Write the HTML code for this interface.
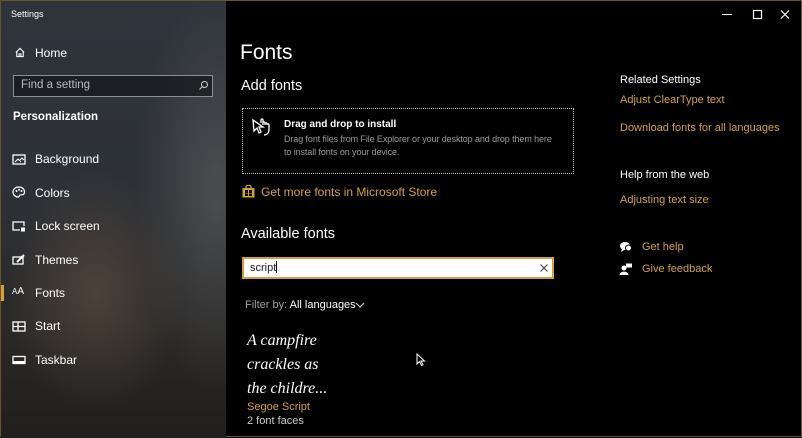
<!DOCTYPE html>
<html><head><meta charset="utf-8"><style>
*{margin:0;padding:0;box-sizing:border-box}
html,body{width:802px;height:437px;overflow:hidden;background:#000;font-family:"Liberation Sans",sans-serif;}
.win{position:absolute;left:0;top:0;width:802px;height:437px;border:1px solid #6b5326;background:#000}
.side{position:absolute;left:0;top:0;width:225px;height:437px;
background:
radial-gradient(ellipse 90px 120px at 95px 290px,rgba(110,88,70,.5),transparent),
radial-gradient(ellipse 80px 200px at 215px 190px,rgba(105,105,105,.5),transparent),
linear-gradient(180deg,#2f343c 0%,#2d3137 40%,#2a2928 75%,#201f1e 100%);}
.t{position:absolute;color:#fff;white-space:nowrap}
.gold{color:#d1a13f}
.nav{position:absolute;left:34px;font-size:12px;color:#fff}
.ic{position:absolute;left:11px;width:14px;height:11px}
</style></head><body><div class="win">
<div class="side">
<div class="t" style="left:10px;top:8px;font-size:9px">Settings</div>
<svg class="ic" style="left:12px;top:46px" width="12" height="12" viewBox="0 0 12 12"><path d="M1.5 6 L6 1.5 L10.5 6 M2.5 5 V10.5 H9.5 V5 M5 10.5 V7.5 H7 V10.5" stroke="#fff" fill="none" stroke-width="1.2"/></svg>
<div class="nav" style="top:45px">Home</div>
<div style="position:absolute;left:12px;top:74px;width:200px;height:22px;border:1px solid #8c8f94;background:rgba(20,22,26,.7)"></div>
<div class="t" style="left:20px;top:78px;font-size:11.5px;color:#b9bcc0">Find a setting</div>
<svg style="position:absolute;left:197px;top:79px" width="11" height="11" viewBox="0 0 11 11"><circle cx="6.5" cy="4.5" r="3" stroke="#ccc" fill="none"/><path d="M4.5 6.5 L1.5 9.5" stroke="#ccc"/></svg>
<div class="t" style="left:12px;top:110px;font-size:11.5px;font-weight:bold">Personalization</div>
<svg class="ic" style="top:153px" viewBox="0 0 14 11"><rect x="1" y="1" width="12" height="9" stroke="#fff" fill="none" stroke-width="1.3"/><path d="M3 8 L6 5 L9 8 M8 6 L10 4 L12 6" stroke="#fff" fill="none"/></svg>
<div class="nav" style="top:151px">Background</div>
<svg class="ic" style="top:185px;height:12px" viewBox="0 0 14 12"><path d="M7 1 C3 1 1 3.5 1 6 C1 9 3.5 11 6 11 C7.5 11 7 9.5 8 9 C9.5 8.5 12.5 9.5 12.5 6 C12.5 3 10 1 7 1Z" stroke="#fff" fill="none" stroke-width="1.2"/><circle cx="4.5" cy="5" r="1" fill="#fff"/><circle cx="7" cy="3.8" r="1" fill="#fff"/><circle cx="9.5" cy="5" r="1" fill="#fff"/></svg>
<div class="nav" style="top:185px">Colors</div>
<svg class="ic" style="top:220px" viewBox="0 0 14 11"><path d="M8 9 H1 V1 H12 V5" stroke="#fff" fill="none" stroke-width="1.3"/><rect x="9" y="6.5" width="4" height="4" fill="#fff"/></svg>
<div class="nav" style="top:218px">Lock screen</div>
<svg class="ic" style="top:253px" viewBox="0 0 14 11"><rect x="1" y="3" width="10" height="7" stroke="#fff" fill="none" stroke-width="1.3"/><path d="M5 8 L12 1" stroke="#fff" stroke-width="2"/></svg>
<div class="nav" style="top:252px">Themes</div>
<div style="position:absolute;left:0;top:284px;width:3px;height:16px;background:#d1a13f"></div>
<div class="t" style="left:11px;top:285px;font-size:8px">A<span style="font-size:10px">A</span></div>
<div class="nav" style="top:285px">Fonts</div>
<svg class="ic" style="top:320px" viewBox="0 0 14 11"><rect x="1" y="1" width="12" height="9" stroke="#fff" fill="none" stroke-width="1.3"/><path d="M1 5.5 H13 M6 1 V10" stroke="#fff" stroke-width="1.3"/></svg>
<div class="nav" style="top:318px">Start</div>
<svg class="ic" style="top:354px" viewBox="0 0 14 11"><rect x="1" y="1.5" width="12" height="7" stroke="#fff" fill="none" stroke-width="1.3"/><path d="M1 7 H13" stroke="#fff" stroke-width="2"/></svg>
<div class="nav" style="top:352px">Taskbar</div>
</div>

<svg style="position:absolute;left:719px;top:8px" width="72" height="12"><path d="M2 5.5 H12" stroke="#fff"/><rect x="33.5" y="1.5" width="8" height="8" stroke="#fff" fill="none" stroke-width="1.2"/><path d="M61 1.5 L69 9.5 M69 1.5 L61 9.5" stroke="#fff" stroke-width="1.1"/></svg>

<div class="t" style="left:239px;top:40px;font-size:21px">Fonts</div>
<div class="t" style="left:240px;top:77px;font-size:14.5px">Add fonts</div>
<div style="position:absolute;left:241px;top:107px;width:332px;height:66px;border:1.5px dotted #bbb"></div>
<svg style="position:absolute;left:250px;top:116px" width="24" height="20" viewBox="0 0 24 20"><path d="M2 3 L3 14 L6 11 L8 16 L10 15 L8 10 L12 10 Z" stroke="#fff" fill="none" stroke-width="1.3"/><path d="M10 6 V3 C10 1.5 12 1.5 12 3 V8 M12 6 C12 4.5 14 4.5 14 6 V8 M14 7 C14 5.5 16 5.5 16 7 V8 M16 8 C16 6.5 18 6.5 18 8 V12 C18 16 16 18 13 18" stroke="#fff" fill="none" stroke-width="1.3"/></svg>
<div class="t" style="left:283px;top:118px;font-size:10px;font-weight:bold">Drag and drop to install</div>
<div class="t" style="left:283px;top:132px;font-size:9px;color:#9a9a9a;line-height:13px;letter-spacing:-0.1px">Drag font files from File Explorer or your desktop and drop them here<br>to install fonts on your device.</div>
<svg style="position:absolute;left:241px;top:183px" width="13" height="14" viewBox="0 0 13 14"><path d="M4 4 V2.5 C4 1 9 1 9 2.5 V4" stroke="#d1a13f" fill="none" stroke-width="1.3"/><rect x="0.5" y="4" width="12" height="9.5" fill="#d1a13f"/><rect x="3" y="6" width="3" height="3" fill="#000"/><rect x="7" y="6" width="3" height="3" fill="#000"/><rect x="3" y="9.5" width="3" height="2.5" fill="#000"/><rect x="7" y="9.5" width="3" height="2.5" fill="#000"/></svg>
<div class="t gold" style="left:260px;top:184px;font-size:12px">Get more fonts in Microsoft Store</div>
<div class="t" style="left:240px;top:225px;font-size:14.5px">Available fonts</div>
<div style="position:absolute;left:241px;top:256px;width:312px;height:22px;border:2px solid #d1a13f;background:#fff"></div>
<div class="t" style="left:249px;top:260px;font-size:11px;color:#222">script<span style="display:inline-block;width:1px;height:12px;background:#000;vertical-align:-2px"></span></div>
<svg style="position:absolute;left:539px;top:263px" width="8" height="8"><path d="M0.5 0.5 L7.5 7.5 M7.5 0.5 L0.5 7.5" stroke="#444" stroke-width="1.1"/></svg>
<div class="t" style="left:244px;top:298px;font-size:11px;color:#a0a0a0">Filter by: <span style="color:#fff">All languages</span></div>
<svg style="position:absolute;left:354px;top:301px" width="10" height="7"><path d="M1 1 L5 5 L9 1" stroke="#ccc" fill="none" stroke-width="1.2"/></svg>
<div class="t" style="left:246px;top:328px;font-size:16px;line-height:24px;font-family:'Liberation Serif',serif;font-style:italic">A campfire<br>crackles as<br>the childre...</div>
<div class="t gold" style="left:246px;top:400px;font-size:11px">Segoe Script</div>
<div class="t" style="left:246px;top:414px;font-size:11px;color:#ccc">2 font faces</div>
<svg style="position:absolute;left:415px;top:352px" width="10" height="14"><path d="M1 1 V11 L3.5 8.5 L5.5 12.5 L7 11.8 L5 8 L8.5 8 Z" fill="#000" stroke="#fff"/></svg>

<div class="t" style="left:619px;top:73px;font-size:11px">Related Settings</div>
<div class="t gold" style="left:619px;top:93px;font-size:11px">Adjust ClearType text</div>
<div class="t gold" style="left:619px;top:121px;font-size:11px">Download fonts for all languages</div>
<div class="t" style="left:619px;top:168px;font-size:11px">Help from the web</div>
<div class="t gold" style="left:619px;top:193px;font-size:11px">Adjusting text size</div>
<svg style="position:absolute;left:618px;top:240px" width="14" height="12"><ellipse cx="6" cy="5" rx="5" ry="4" fill="#fff"/><path d="M3 8 L2 11 L6 8.5Z" fill="#fff"/><circle cx="9.5" cy="7" r="3" fill="#fff" stroke="#000"/></svg>
<div class="t gold" style="left:641px;top:240px;font-size:11px">Get help</div>
<svg style="position:absolute;left:618px;top:262px" width="14" height="12"><circle cx="5" cy="5" r="2.5" fill="#fff"/><path d="M0.5 12 C0.5 7.5 9.5 7.5 9.5 12Z" fill="#fff"/><rect x="7" y="0.5" width="6" height="4" fill="#fff"/></svg>
<div class="t gold" style="left:641px;top:262px;font-size:11px">Give feedback</div>
</div></body></html>
